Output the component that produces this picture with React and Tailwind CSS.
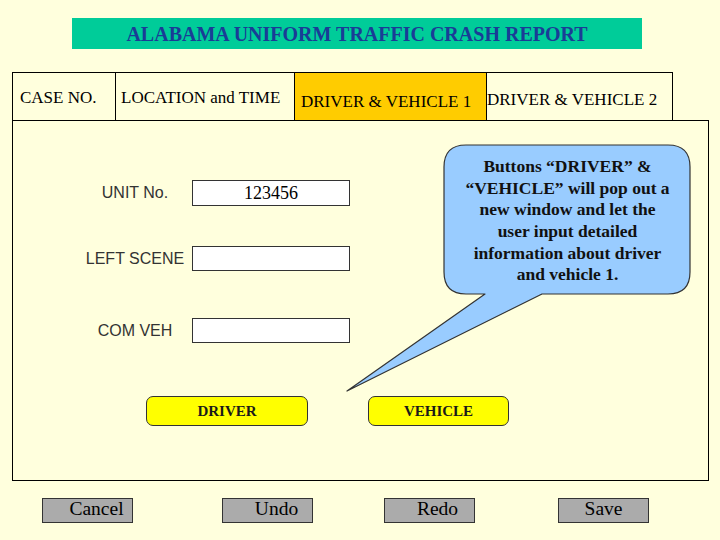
import React from "react";

function Field({ label, height, top, value }) {
  return (
    <div className={`flex items-center ${top}`}>
      <div className="w-[110px] ml-[67px] text-center font-['Liberation_Sans',Arial,sans-serif] text-[16px] text-[#333] leading-none whitespace-nowrap">
        {label}
      </div>
      <div
        className={`ml-[2px] w-[158px] ${height} bg-white border border-[#333] flex items-center justify-center text-[18px] text-black leading-none`}
      >
        {value}
      </div>
    </div>
  );
}

function GrayBtn({ children, cls }) {
  return (
    <div
      className={`w-[91px] h-[25px] bg-[#ababab] border border-[#333] flex items-center justify-center text-[19.5px] leading-none text-black pb-[3px] ${cls}`}
    >
      {children}
    </div>
  );
}

export default function App() {
  return (
    <div className="relative w-[720px] h-[540px] bg-[#ffffdd] overflow-hidden font-['Liberation_Serif','Times_New_Roman',serif] text-black">
      {/* Title */}
      <div className="pt-[18px] pl-[72px]">
        <div className="w-[570px] h-[31px] bg-[#00cc99] flex items-center justify-center text-[20px] font-bold text-[#1a3c96] leading-none">
          ALABAMA UNIFORM TRAFFIC CRASH REPORT
        </div>
      </div>

      {/* Tabs */}
      <div className="mt-[23px] ml-[12px] flex h-[48px] text-[17px] leading-none">
        <div className="w-[104px] border-t border-l border-r border-black flex items-center pl-[7px] pt-[2px]">
          CASE NO.
        </div>
        <div className="w-[179px] border-t border-r border-black flex items-center pl-[5px] pt-[2px]">
          LOCATION and TIME
        </div>
        <div className="w-[192px] border-t border-r border-black bg-[#ffcc00] flex items-center pl-[6px] pt-[10px]">
          DRIVER &amp; VEHICLE 1
        </div>
        <div className="w-[186px] border-t border-r border-black flex items-center pl-[0px] pt-[5px]">
          DRIVER &amp; VEHICLE 2
        </div>
      </div>

      {/* Panel */}
      <div className="ml-[12px] w-[697px] h-[361px] border border-black pt-[59px]">
        <Field label="UNIT No." height="h-[26px]" top="" value="123456" />
        <Field label="LEFT SCENE" height="h-[25px]" top="mt-[40px]" value="" />
        <Field label="COM VEH" height="h-[25px]" top="mt-[47px]" value="" />
        <div className="mt-[53px] flex text-[15px] font-bold leading-none text-[#1a1a1a]">
          <div className="ml-[133px] w-[162px] h-[30px] bg-[#ffff00] border border-[#333] rounded-[7px] flex items-center justify-center">
            DRIVER
          </div>
          <div className="ml-[60px] w-[141px] h-[30px] bg-[#ffff00] border border-[#333] rounded-[7px] flex items-center justify-center">
            VEHICLE
          </div>
        </div>
      </div>

      {/* Bottom buttons */}
      <div className="mt-[17px] flex">
        <GrayBtn cls="ml-[42px] pl-[18px]">Cancel</GrayBtn>
        <GrayBtn cls="ml-[89px] pl-[18px]">Undo</GrayBtn>
        <GrayBtn cls="ml-[71px] pl-[16px]">Redo</GrayBtn>
        <GrayBtn cls="ml-[83px]">Save</GrayBtn>
      </div>

      {/* Callout */}
      <svg
        className="absolute left-0 top-0 pointer-events-none"
        width="720"
        height="540"
        viewBox="0 0 720 540"
      >
        <path
          d="M 466 145 H 668 Q 690 145 690 167 V 272 Q 690 294 668 294 H 542 L 347 391 L 485 294 H 466 Q 444 294 444 272 V 167 Q 444 145 466 145 Z"
          fill="#99ccff"
          stroke="#333"
          strokeWidth="1.2"
          strokeLinejoin="round"
        />
      </svg>
      <div className="absolute left-[444px] top-[145px] w-[247px] h-[150px] flex items-center justify-center text-center text-[17.5px] font-bold leading-[21.6px] text-[#111]">
        <div className="pt-[2px]">
          Buttons “DRIVER” &amp;
          <br />
          “VEHICLE” will pop out a
          <br />
          new window and let the
          <br />
          user input detailed
          <br />
          information about driver
          <br />
          and vehicle 1.
        </div>
      </div>
    </div>
  );
}
